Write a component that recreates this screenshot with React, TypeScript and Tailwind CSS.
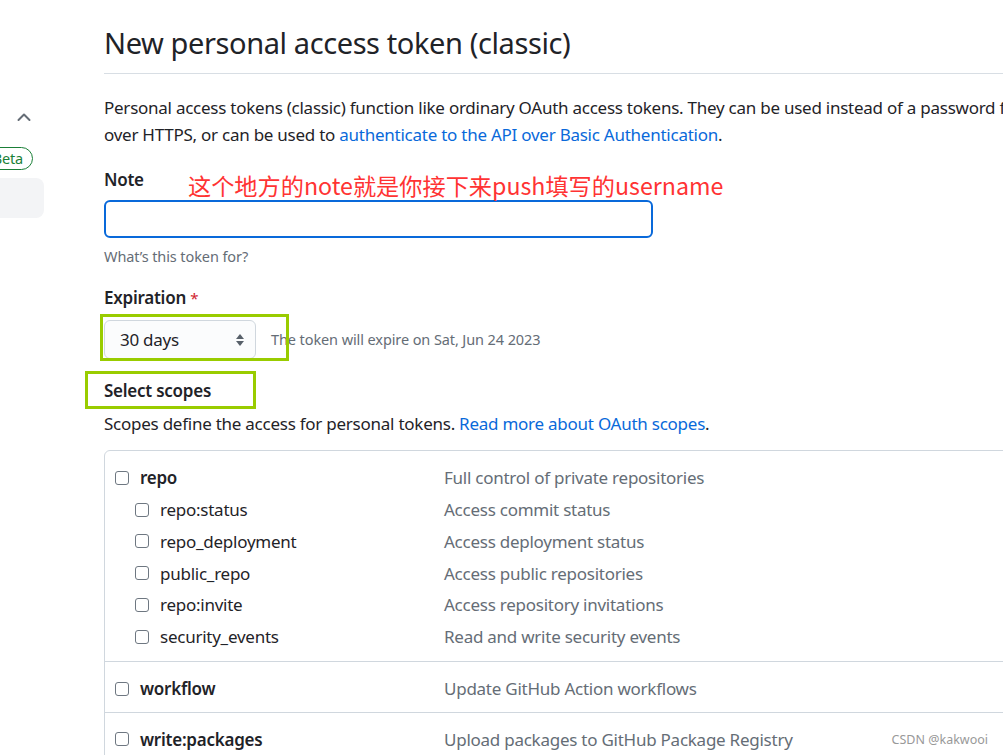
import React from 'react'

const scopes = [
    {
        name: 'repo',
        desc: 'Full control of private repositories',
        children: [
            { name: 'repo:status', desc: 'Access commit status' },
            { name: 'repo_deployment', desc: 'Access deployment status' },
            { name: 'public_repo', desc: 'Access public repositories' },
            { name: 'repo:invite', desc: 'Access repository invitations' },
            { name: 'security_events', desc: 'Read and write security events' },
        ],
    },
    { name: 'workflow', desc: 'Update GitHub Action workflows', children: [] },
    { name: 'write:packages', desc: 'Upload packages to GitHub Package Registry', children: [] },
]

function Box() {
    return <span className="inline-block h-[14px] w-[14px] shrink-0 rounded-[3px] border border-[#6e7781] bg-white" />
}

export default function App() {
    return (
        <div
            className="relative h-[755px] w-[1003px] overflow-hidden bg-white text-[#1f2328]"
            style={{ fontFamily: '"Noto Sans", "Noto Sans CJK SC", sans-serif' }}
        >
            <div className="flex">
                {/* sidebar edge */}
                <aside className="w-[44px] shrink-0 overflow-hidden">
                    <div className="mt-[112px] flex justify-end pr-[13px]">
                        <svg width="14" height="10" viewBox="0 0 14 10" fill="none">
                            <path d="M1.5 8L7 2.5L12.5 8" stroke="#656d76" strokeWidth="2" strokeLinecap="round" strokeLinejoin="round" />
                        </svg>
                    </div>
                    <div className="mt-[25px] flex justify-end pr-[11px]">
                        <span className="rounded-full border border-[#1a7f37] pl-[8px] pr-[9px] text-[14.5px] leading-[21px] tracking-[-0.2px] text-[#1a7f37]">Beta</span>
                    </div>
                    <div className="-ml-[20px] mt-[8px] h-[40px] w-[64px] rounded-lg bg-[#f3f4f6]" />
                </aside>

                <main className="ml-[60px] w-[920px] shrink-0 text-[17px] tracking-[-0.25px]">
                    <div className="border-b border-[#d8dee4] pt-[20px] pb-[8px]">
                        <h1 className="text-[29px] leading-[45px] font-normal tracking-[-0.4px]">New personal access token (classic)</h1>
                    </div>

                    <p className="mt-[20px] whitespace-nowrap leading-[27px]">
                        Personal access tokens (classic) function like ordinary OAuth access tokens. They can be used instead of a password for Git
                        <br />
                        over HTTPS, or can be used to{' '}
                        <span className="text-[#0969da]">authenticate to the API over Basic Authentication</span>.
                    </p>

                    <div className="mt-[20px] leading-[24px] font-semibold">Note</div>
                    <div className="mt-[8px] h-[38px] w-[549px] rounded-[6px] border-2 border-[#0969da]" />
                    <div className="mt-[8px] text-[14.5px] leading-[20px] tracking-[-0.1px] text-[#656d76]">What’s this token for?</div>

                    <div className="mt-[20px] leading-[24px] font-semibold">
                        Expiration <span className="align-top text-[15px] font-normal text-[#cf222e]">*</span>
                    </div>
                    <div className="mt-[10px] flex items-center">
                        <div className="flex h-[39px] w-[152px] items-center justify-between rounded-[6px] border border-[#d0d7de] bg-[#fbfcfd] pl-[15px] pr-[10px]">
                            <span>30 days</span>
                            <svg width="10" height="14" viewBox="0 0 10 14">
                                <path d="M5 1L9 6H1Z" fill="#57606a" />
                                <path d="M5 13L9 8H1Z" fill="#57606a" />
                            </svg>
                        </div>
                        <span className="ml-[15px] text-[14.5px] tracking-[-0.1px] text-[#656d76]">The token will expire on Sat, Jun 24 2023</span>
                    </div>

                    <div className="mt-[20px] leading-[24px] font-semibold">Select scopes</div>
                    <p className="mt-[9px] leading-[24px]">
                        Scopes define the access for personal tokens. <span className="text-[#0969da]">Read more about OAuth scopes</span>.
                    </p>

                    <div className="mt-[14px] w-[1000px] rounded-[6px] border border-[#d0d7de]">
                        {scopes.map((s, i) => (
                            <div key={s.name} className={`pt-[11px] ${i > 0 ? 'border-t border-[#d0d7de]' : ''} ${i === 0 ? 'pb-[8px]' : 'pb-[7px]'}`}>
                                <div className="flex h-[31.8px] items-center">
                                    <div className="flex w-[339px] items-center gap-[11px] pl-[10px]">
                                        <Box />
                                        <span className="font-semibold">{s.name}</span>
                                    </div>
                                    <span className="text-[#656d76]">{s.desc}</span>
                                </div>
                                {s.children.map((c) => (
                                    <div key={c.name} className="flex h-[31.8px] items-center">
                                        <div className="flex w-[339px] items-center gap-[11px] pl-[30px]">
                                            <Box />
                                            <span>{c.name}</span>
                                        </div>
                                        <span className="text-[#656d76]">{c.desc}</span>
                                    </div>
                                ))}
                            </div>
                        ))}
                    </div>
                </main>
            </div>

            {/* annotations from the screenshot author */}
            <div
                className="absolute left-[188px] top-[169px] text-[23.2px] leading-[32px] text-[#ff3333]"
                style={{ fontFamily: '"Noto Sans CJK SC", sans-serif' }}
            >
                这个地方的note就是你接下来push填写的username
            </div>
            <div className="absolute left-[100px] top-[314px] h-[47px] w-[189px] border-[3px] border-[#99cc00]" />
            <div className="absolute left-[85px] top-[371px] h-[38px] w-[171px] border-[3px] border-[#99cc00]" />
            <div className="absolute right-[15px] top-[731px] text-[12.5px] text-[#999999]">CSDN @kakwooi</div>
        </div>
    )
}
